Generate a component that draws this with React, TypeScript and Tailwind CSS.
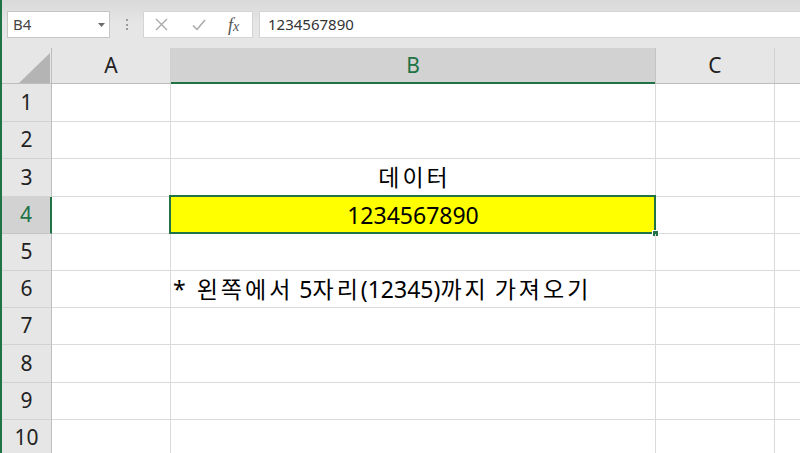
import { type ReactNode } from 'react';

const FONT = 'font-["Noto_Sans","Noto_Sans_CJK_KR",sans-serif]';

const rowHeights = ['h-[38px]', 'h-[37px]', 'h-[38px]', 'h-[37px]', 'h-[37px]', 'h-[37px]', 'h-[37px]', 'h-[38px]', 'h-[37px]', 'h-[37px]'];

// hangul in Excel's Malgun Gothic sits wider than Noto, so loosen it a bit
const Ko = ({ children }: { children: ReactNode }) => <span className="tracking-[3px]">{children}</span>;

const cells: Record<number, ReactNode> = {
    3: <span className="block w-full text-center pl-[3px]"><Ko>데이터</Ko></span>,
    4: <span className="block w-full text-center">1234567890</span>,
    6: (
        <span className="block w-full pl-[2px] whitespace-nowrap">
            *<span className="inline-block w-[11px]" /><Ko>왼쪽에서</Ko> 5<Ko>자리</Ko>(12345)<Ko>까지</Ko> <Ko>가져오기</Ko>
        </span>
    ),
};

const FormulaBar = () => (
    <div className="h-[48px] flex items-center bg-gradient-to-b from-[#d9d9d9] via-[#e6e6e6] to-[#e6e6e6] pl-[5px] pt-[1px]">
        <div className="w-[103px] h-[27px] bg-white border border-[#c6c6c6] flex items-center justify-between pl-[5px] pr-[4px] text-[15px] text-[#444]">
            <span>B4</span>
            <svg width="7" height="4" viewBox="0 0 7 4"><path d="M0 0h7L3.5 4z" fill="#6b6b6b" /></svg>
        </div>
        <div className="w-[33px] flex flex-col items-center gap-[2.5px]">
            <span className="w-[2px] h-[2px] bg-[#9b9b9b]" />
            <span className="w-[2px] h-[2px] bg-[#9b9b9b]" />
            <span className="w-[2px] h-[2px] bg-[#9b9b9b]" />
        </div>
        <div className="w-[110px] h-[27px] bg-white border border-[#d4d4d4] flex items-center">
            <svg className="ml-[11px]" width="13" height="13" viewBox="0 0 13 13">
                <path d="M1 1l11 11M12 1L1 12" stroke="#a8a8a8" strokeWidth="1.3" />
            </svg>
            <svg className="ml-[24px]" width="14" height="12" viewBox="0 0 14 12">
                <path d="M1 6.5l4 4L13 1" stroke="#a8a8a8" strokeWidth="1.5" fill="none" />
            </svg>
            <span className="ml-[22px] text-[18px] leading-none italic text-[#555] font-['Liberation_Serif',serif]">
                f<span className="text-[14px]">x</span>
            </span>
        </div>
        <div className="ml-[6px] flex-1 h-[27px] bg-white border border-r-0 border-[#d4d4d4] flex items-center pl-[8px] text-[15px] text-[#333]">
            1234567890
        </div>
    </div>
);

const HeaderRow = () => (
    <div className="flex h-[36px] bg-[#e6e6e6] border-b border-[#bdbdbd] text-[21px] text-[#222]">
        <div className="w-[50px] shrink-0 border-r border-[#bdbdbd] flex items-end justify-end pr-[1px]">
            <svg width="31" height="30" viewBox="0 0 31 30"><path d="M31 0v30H0z" fill="#b4b4b4" /></svg>
        </div>
        <div className="w-[119px] shrink-0 border-r border-[#d0d0d0] flex items-center justify-center">A</div>
        <div className="w-[485px] shrink-0 border-r border-[#c4c4c4] bg-[#d2d2d2] flex items-center justify-center text-[#217346] relative">
            B
            <span className="absolute left-0 right-0 -bottom-[1px] h-[2px] bg-[#217346]" />
        </div>
        <div className="w-[119px] shrink-0 border-r border-[#d0d0d0] flex items-center justify-center">C</div>
        <div className="flex-1" />
    </div>
);

const App = () => {
    return (
        <div className={`w-[800px] h-[453px] overflow-hidden bg-white border-l-2 border-[#217346] ${FONT}`}>
            <FormulaBar />
            <HeaderRow />
            {rowHeights.map((h, i) => {
                const n = i + 1;
                const selected = n === 4;
                return (
                    <div key={n} className={`flex ${h}`}>
                        <div
                            className={`w-[50px] shrink-0 flex items-center justify-center text-[21px] border-b ${
                                selected
                                    ? 'bg-[#d2d2d2] text-[#217346] border-r-2 border-r-[#217346] border-b-[#c4c4c4]'
                                    : 'bg-[#e6e6e6] text-[#222] border-r border-r-[#bdbdbd] border-b-[#d2d2d2]'
                            }`}
                        >
                            {n}
                        </div>
                        <div className="w-[119px] shrink-0 border-r border-b border-[#dadada]" />
                        <div
                            className={`w-[485px] shrink-0 border-r border-b border-[#dadada] flex items-center text-[23px] text-black relative ${
                                selected ? 'bg-[#ffff00]' : ''
                            }`}
                        >
                            {cells[n]}
                            {selected && (
                                <>
                                    <span className="absolute -top-[2px] -left-[2px] -right-[1px] -bottom-[1px] border-2 border-[#217346] pointer-events-none" />
                                    <span className="absolute -right-[4px] -bottom-[4px] w-[7px] h-[7px] bg-[#217346] border border-white" />
                                </>
                            )}
                        </div>
                        <div className="w-[119px] shrink-0 border-r border-b border-[#dadada]" />
                        <div className="flex-1 border-b border-[#dadada]" />
                    </div>
                );
            })}
        </div>
    );
};

export default App;
